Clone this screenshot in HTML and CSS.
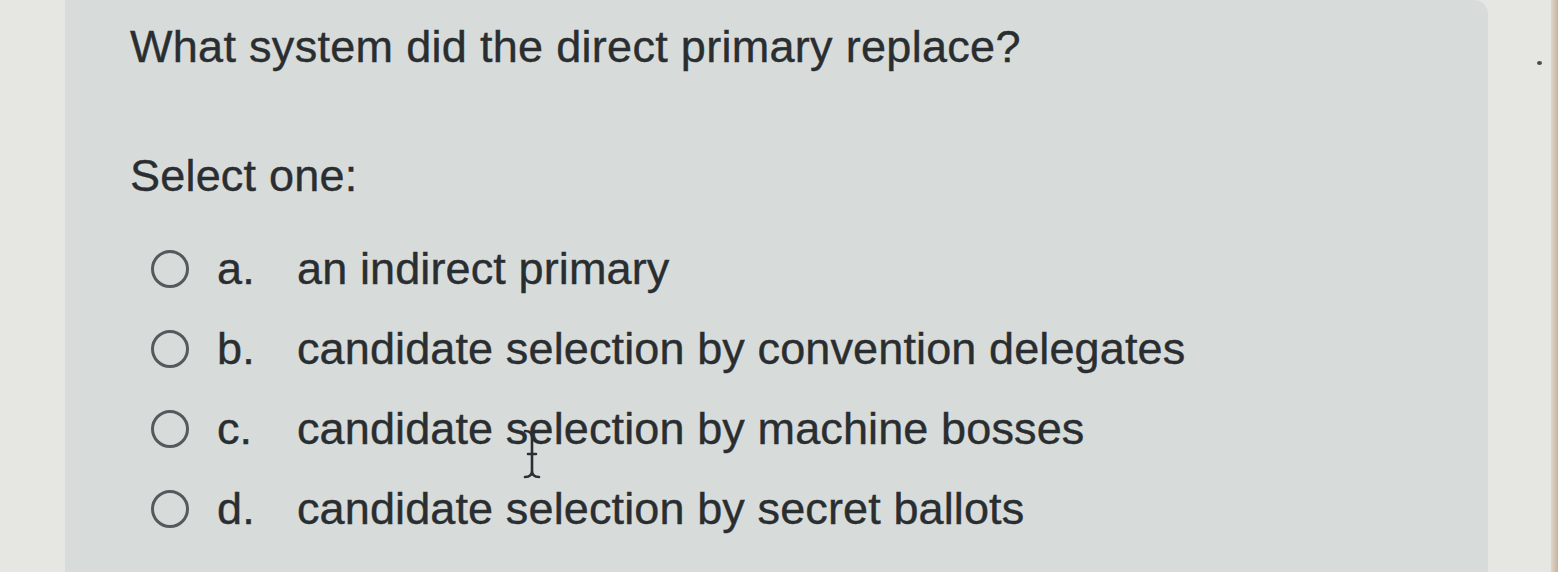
FILE: index.html
```html
<!DOCTYPE html>
<html lang="en">
<head>
<meta charset="utf-8">
<title>Quiz question</title>
<link rel="stylesheet" href="styles.css">
</head>
<body>
<div class="screen">
  <div class="gutter-left"></div>
  <main class="panel">
    <h1 class="question">What system did the direct primary replace?</h1>
    <p class="prompt">Select one:</p>
    <ul class="options">
      <li class="option"><span class="radio"></span><span class="letter">a.</span><span class="answer">an indirect primary</span></li>
      <li class="option"><span class="radio"></span><span class="letter">b.</span><span class="answer">candidate selection by convention delegates</span></li>
      <li class="option cursor-row"><span class="radio"></span><span class="letter">c.</span><span class="answer">candidate selection by machine bosses</span>
        <svg class="ibeam" width="20" height="50" viewBox="0 0 20 50" aria-hidden="true">
          <path d="M3 2 C7 2 10 4 10 8 C10 4 13 2 17 2 M10 8 V42 M3 48 C7 48 10 46 10 42 C10 46 13 48 17 48 M6 25 H14" fill="none" stroke="#2b2f31" stroke-width="2.6" stroke-linecap="round"/>
        </svg>
      </li>
      <li class="option"><span class="radio"></span><span class="letter">d.</span><span class="answer">candidate selection by secret ballots</span></li>
    </ul>
  </main>
  <div class="gutter-right"><span class="speck"></span></div>
  <div class="bezel"></div>
</div>
</body>
</html>
```

FILE: styles.css
```css
html, body {
  margin: 0;
  padding: 0;
}

body {
  background: #e6e6e3;
  font-family: "Liberation Sans", Arial, sans-serif;
  color: #2a2e30;
}

.screen {
  display: flex;
  width: 1558px;
  height: 572px;
  overflow: hidden;
  background: #e6e6e3;
}

.gutter-left {
  width: 65px;
  flex: none;
}

.panel {
  width: 1423px;
  flex: none;
  background: #d7dcdb;
  border-top-right-radius: 14px;
  padding: 21px 0 0 65px;
  box-sizing: border-box;
  -webkit-text-stroke: 0.4px #2a2e30;
}

.question {
  margin: 0;
  font-size: 45px;
  font-weight: normal;
  line-height: 52px;
  letter-spacing: 0.3px;
}

.prompt {
  margin: 77px 0 0;
  font-size: 45px;
  line-height: 52px;
  letter-spacing: 0.2px;
}

.options {
  list-style: none;
  margin: 27px 0 0;
  padding: 0 0 0 21px;
}

.option {
  display: flex;
  align-items: center;
  height: 80px;
  font-size: 45px;
  line-height: 80px;
  letter-spacing: 0.12px;
  position: relative;
}

.radio {
  width: 32px;
  height: 32px;
  border: 3px solid #56595b;
  border-radius: 50%;
  flex: none;
}

.letter {
  width: 80px;
  margin-left: 28px;
  flex: none;
}

.answer {
  white-space: nowrap;
}

.ibeam {
  position: absolute;
  left: 371px;
  top: 40px;
}

.gutter-right {
  flex: 1;
  position: relative;
}

.speck {
  position: absolute;
  left: 49px;
  top: 61px;
  width: 5px;
  height: 4px;
  border-radius: 50%;
  background: #4a4a4a;
}

.bezel {
  width: 7px;
  flex: none;
  background: linear-gradient(to right, #ddd6cc, #c9b39c);
}
```
